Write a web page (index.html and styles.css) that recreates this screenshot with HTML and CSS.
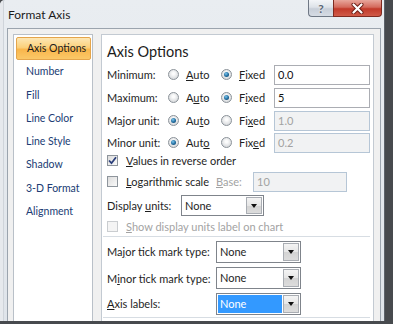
FILE: index.html
```html
<!DOCTYPE html>
<html lang="en">
<head>
  <meta charset="UTF-8" />
  <meta name="viewport" content="width=device-width, initial-scale=1.0" />
  <title>Format Axis</title>
  <link rel="stylesheet" href="styles.css">
</head>
<body>

<div class="window">
  <div class="titlebar">
    <span class="title">Format Axis</span>
    <div class="caption-buttons">
      <span class="btn-help">?</span>
      <span class="btn-close">
        <svg width="13" height="11" viewBox="0 0 13 11">
          <path d="M2.5 1.5 L10.5 9.5 M10.5 1.5 L2.5 9.5" stroke="#6b1d14" stroke-width="4" stroke-linecap="round"/>
          <path d="M2.5 1.5 L10.5 9.5 M10.5 1.5 L2.5 9.5" stroke="#fff" stroke-width="2.2" stroke-linecap="round"/>
        </svg>
      </span>
    </div>
  </div>

  <div class="client">
    <ul class="nav">
      <li class="active">Axis Options</li>
      <li>Number</li>
      <li>Fill</li>
      <li>Line Color</li>
      <li>Line Style</li>
      <li>Shadow</li>
      <li>3-D Format</li>
      <li>Alignment</li>
    </ul>

    <div class="panel">
      <h2>Axis Options</h2>

      <div class="row r-min">
        <span class="label">Minimum:</span>
        <span class="opt"><span class="radio"></span><span><u>A</u>uto</span></span>
        <span class="opt"><span class="radio on"></span><span><u>F</u>ixed</span></span>
        <span class="textbox">0.0</span>
      </div>
      <div class="row r-max">
        <span class="label">Maximum:</span>
        <span class="opt"><span class="radio"></span><span>A<u>u</u>to</span></span>
        <span class="opt"><span class="radio on"></span><span>F<u>i</u>xed</span></span>
        <span class="textbox">5</span>
      </div>
      <div class="row r-major">
        <span class="label">Major unit:</span>
        <span class="opt"><span class="radio on"></span><span>Au<u>t</u>o</span></span>
        <span class="opt"><span class="radio"></span><span>Fi<u>x</u>ed</span></span>
        <span class="textbox disabled">1.0</span>
      </div>
      <div class="row r-minor">
        <span class="label">Minor unit:</span>
        <span class="opt"><span class="radio on"></span><span>Aut<u>o</u></span></span>
        <span class="opt"><span class="radio"></span><span>Fix<u>e</u>d</span></span>
        <span class="textbox disabled">0.2</span>
      </div>

      <div class="row r-values">
        <span class="check on">
          <svg width="9" height="9" viewBox="0 0 9 9"><path d="M1 4.5 L3.5 7.2 L8 1.2" fill="none" stroke="#2b3f7a" stroke-width="1.8"/></svg>
        </span>
        <span><u>V</u>alues in reverse order</span>
      </div>
      <div class="row r-log">
        <span class="check-wide"><span class="check"></span><span><u>L</u>ogarithmic scale</span></span>
        <span class="base-label"><u>B</u>ase:</span>
        <span class="textbox disabled base-box">10</span>
      </div>
      <div class="row r-display">
        <span class="label display-label">Display <u>u</u>nits:</span>
        <span class="select display-select">
          <span class="value">None</span>
          <span class="arrow"></span>
        </span>
      </div>
      <div class="row r-show">
        <span class="check off"></span>
        <span class="muted"><u>S</u>how display units label on chart</span>
      </div>

      <div class="separator"></div>

      <div class="row r-tick1">
        <span class="label tick-label">Ma<u>j</u>or tick mark type:</span>
        <span class="select tick-select">
          <span class="value">None</span>
          <span class="arrow"></span>
        </span>
      </div>
      <div class="row r-tick2">
        <span class="label tick-label">M<u>i</u>nor tick mark type:</span>
        <span class="select tick-select">
          <span class="value">None</span>
          <span class="arrow"></span>
        </span>
      </div>
      <div class="row r-labels">
        <span class="label tick-label"><u>A</u>xis labels:</span>
        <span class="select tick-select focused">
          <span class="value">None</span>
          <span class="arrow"></span>
        </span>
      </div>

      <div class="separator"></div>
    </div>
  </div>
</div>

</body>
</html>
```

FILE: styles.css
```css
body {
  margin: 0;
  width: 393px;
  height: 324px;
  overflow: hidden;
  background: #474a4e;
  font-family: Lato, 'Open Sans', sans-serif;
  font-size: 11px;
  color: #1e1e1e;
}
.window {
  width: 385px;
  height: 321px;
  box-sizing: border-box;
  border-right: 1px solid #5d636b;
  border-radius: 5px 0 0 0;
  background: linear-gradient(90deg, #e6e9ed 0, #e6e9ed 3px, #cfd4da 3px, #cfd4da 4px, transparent 4px),
              linear-gradient(#e9edf1, #dfe4ea);
  overflow: hidden;
}

/* title bar */
.titlebar {
  height: 28px;
  display: flex;
  justify-content: space-between;
  align-items: flex-start;
}
.title {
  margin: 8px 0 0 8px;
  font-size: 12px;
  line-height: 14px;
  color: #1b1b1b;
}
.caption-buttons {
  display: flex;
  margin-right: 2px;
}
.btn-help, .btn-close {
  height: 17px;
  box-sizing: border-box;
  border: 1px solid #6f7885;
  border-top: none;
  display: flex;
  align-items: center;
  justify-content: center;
}
.btn-help {
  width: 25px;
  border-right: none;
  border-radius: 0 0 0 4px;
  background: linear-gradient(#f3f5f8, #dde2e8 45%, #c7ced8 55%, #d6dce4);
  font-weight: bold;
  font-size: 12px;
  color: #5a6473;
  text-shadow: 0 0 2px #fff;
}
.btn-close {
  width: 49px;
  border-color: #7e2a20;
  border-radius: 0 0 4px 0;
  background: linear-gradient(#e8a79c, #d46a5c 45%, #c23a2a 55%, #d05a48);
}

/* client area */
.client {
  margin-left: 7px;
  width: 374px;
  height: 293px;
  box-sizing: border-box;
  border: 1px solid #9ba4ae;
  border-bottom: none;
  background: #f0f0f0;
  padding: 5px 0 0 5px;
  display: flex;
  gap: 8px;
}
.nav {
  list-style: none;
  margin: 0;
  padding: 2px 0 0 2px;
  width: 80px;
  height: 300px;
  flex: none;
  box-sizing: border-box;
  border: 1px solid #b9c0c8;
  background: #fff;
  font-size: 10.5px;
}
.nav li {
  height: 23.3px;
  line-height: 23.3px;
  padding-left: 10px;
  color: #203c74;
}
.nav li.active {
  width: 75px;
  box-sizing: border-box;
  border: 1px solid #e5a54b;
  border-radius: 2px;
  line-height: 21px;
  color: #1a1a1a;
  background: linear-gradient(#fde7b5, #fbd07b 45%, #f9b64c 55%, #fbc868);
}

.panel {
  width: 273px;
  height: 300px;
  flex: none;
  box-sizing: border-box;
  border: 1px solid #c3cad2;
  background: #fff;
  padding: 0 3px 0 5px;
  overflow: hidden;
}
h2 {
  margin: 0;
  height: 28px;
  box-sizing: border-box;
  padding-top: 6px;
  font-size: 14.5px;
  font-weight: normal;
  line-height: 22px;
  color: #1b1b1b;
}

.row {
  display: flex;
  align-items: center;
}
.r-min { height: 23px; }
.r-max { height: 23px; }
.r-major { height: 23px; }
.r-minor { height: 21px; }
.r-values { height: 15px; }
.r-log { height: 27px; }
.r-display { height: 21px; }
.r-show { height: 20px; }
.r-tick1 { height: 29px; }
.r-tick2 { height: 24px; }
.r-labels { height: 27px; }

.label {
  width: 61px;
  flex: none;
}
.display-label { width: 74px; }
.tick-label { width: 109px; }

.opt {
  width: 53px;
  flex: none;
  display: flex;
  align-items: center;
}

.radio {
  width: 11px;
  height: 11px;
  flex: none;
  box-sizing: border-box;
  margin-right: 7px;
  border: 1px solid #8b9299;
  border-radius: 50%;
  background: radial-gradient(circle at 50% 40%, #fcfcfc 15%, #d2d5d8 85%);
  display: flex;
  align-items: center;
  justify-content: center;
}
.radio.on::after {
  content: "";
  width: 5px;
  height: 5px;
  border-radius: 50%;
  background: radial-gradient(circle at 40% 35%, #7cc6ee, #1f6a9c 55%, #0f3d62);
}

.textbox {
  width: 96px;
  height: 20px;
  flex: none;
  box-sizing: border-box;
  border: 1px solid #abadb3;
  padding-left: 3px;
  line-height: 18px;
  background: #fff;
  color: #111;
}
.textbox.disabled {
  border-color: #b6c6d6;
  background: #f1f2f3;
  color: #a2a2a2;
}
.r-log .base-box {
  width: 94px;
}

.check {
  width: 11px;
  height: 11px;
  flex: none;
  box-sizing: border-box;
  margin-right: 8px;
  border: 1px solid #8e959c;
  background: linear-gradient(135deg, #dcdcdc, #fafafa);
  display: flex;
  align-items: center;
  justify-content: center;
}
.check.off {
  border-color: #cacdd0;
  background: #f4f4f4;
}
.check-wide {
  width: 109px;
  flex: none;
  display: flex;
  align-items: center;
}
.base-label {
  width: 37px;
  flex: none;
  color: #a3a3a3;
}
.muted {
  color: #a3a3a3;
}

.select {
  height: 21px;
  flex: none;
  box-sizing: border-box;
  border: 1px solid #7f848b;
  background: #fff;
  display: flex;
  padding: 1px;
}
.display-select { width: 83px; }
.tick-select { width: 85px; height: 22px; }
.select .value {
  flex: 1;
  padding-left: 2px;
  line-height: 18px;
}
.select .arrow {
  width: 16px;
  box-sizing: border-box;
  border: 1px solid #a9adb3;
  background: linear-gradient(#f4f4f4, #e6e6e6 50%, #d3d3d3 51%, #dcdcdc);
  display: flex;
  align-items: center;
  justify-content: center;
}
.select .arrow::after {
  content: "";
  border-left: 3.5px solid transparent;
  border-right: 3.5px solid transparent;
  border-top: 4px solid #111;
}
.select.focused .value {
  background: #3399ff;
  color: #fff;
  margin-right: 1px;
}

.separator {
  height: 1px;
  margin-left: -4px;
  background: #d7dde3;
}
```
